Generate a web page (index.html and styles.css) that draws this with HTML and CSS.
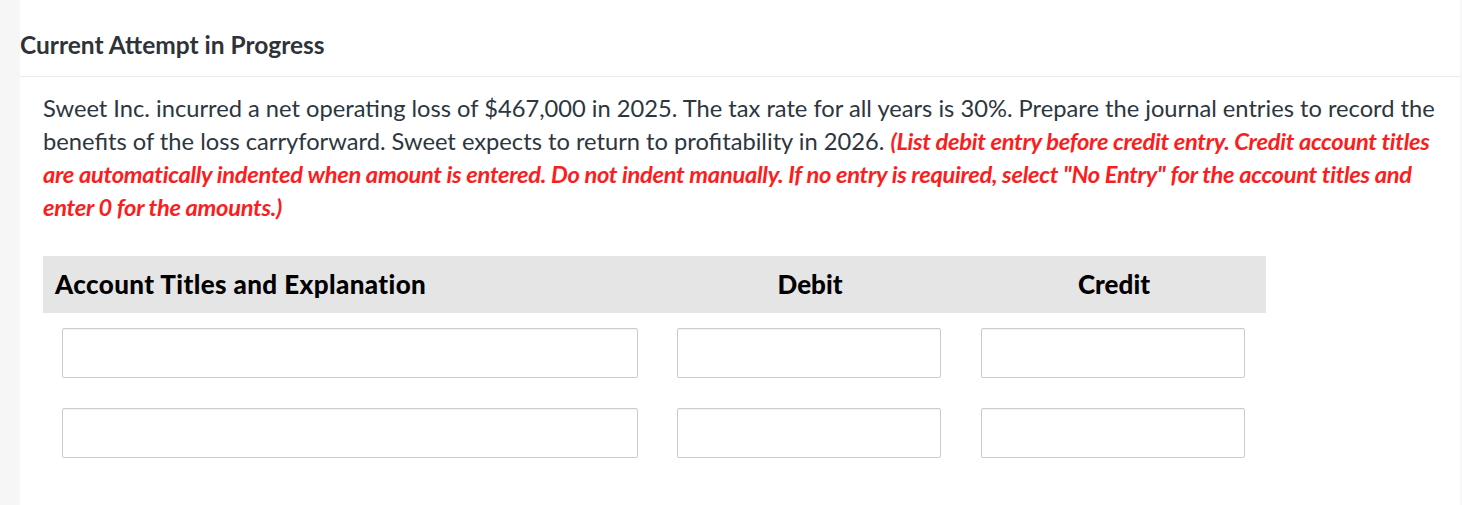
FILE: index.html
```html
<!DOCTYPE html>
<html>
<head>
<meta charset="utf-8">
<link rel="stylesheet" href="styles.css">
</head>
<body>
<div class="page">
  <div class="attempt-header">
    <h2 class="attempt-title">Current Attempt in Progress</h2>
  </div>
  <div class="question">
    <p class="question-text">Sweet Inc. incurred a net operating loss of $467,000 in 2025. The tax rate for all years is 30%. Prepare the journal entries to record the benefits of the loss carryforward. Sweet expects to return to profitability in 2026. <span class="instructions">(List debit entry before credit entry. Credit account titles are automatically indented when amount is entered. Do not indent manually. If no entry is required, select "No Entry" for the account titles and enter 0 for the amounts.)</span></p>
    <div class="journal">
      <div class="journal-head">
        <div class="col col-account">Account Titles and Explanation</div>
        <div class="col col-amount">Debit</div>
        <div class="col col-amount">Credit</div>
      </div>
      <div class="journal-row">
        <div class="cell cell-account"><input class="field" type="text"></div>
        <div class="cell cell-amount"><input class="field" type="text"></div>
        <div class="cell cell-amount"><input class="field" type="text"></div>
      </div>
      <div class="journal-row">
        <div class="cell cell-account"><input class="field" type="text"></div>
        <div class="cell cell-amount"><input class="field" type="text"></div>
        <div class="cell cell-amount"><input class="field" type="text"></div>
      </div>
    </div>
  </div>
</div>
</body>
</html>
```

FILE: styles.css
```css
html, body {
  margin: 0;
  padding: 0;
}
body {
  background: #f6f6f6;
  font-family: Lato, "Liberation Sans", sans-serif;
  height: 505px;
  overflow: hidden;
}
.page {
  margin-left: 20px;
  width: 1440px;
  background: #ffffff;
  min-height: 505px;
}
.attempt-header {
  padding: 29px 0 0 0;
  border-bottom: 1px solid #e9e9e9;
  box-sizing: border-box;
  height: 77px;
}
.attempt-title {
  margin: 0;
  font-size: 24.5px;
  font-weight: 700;
  color: #2f3338;
  line-height: 32px;
}
.question {
  padding: 0 0 0 23px;
}
.question-text {
  margin: 15px 0 0 0;
  font-size: 23.7px;
  line-height: 33px;
  color: #2d3640;
  width: 1400px;
}
.instructions {
  color: #fa1e1e;
  font-weight: 700;
  font-style: italic;
  letter-spacing: -0.3px;
}
.journal {
  margin-top: 32px;
  width: 1223px;
}
.journal-head {
  display: flex;
  height: 57px;
  align-items: center;
  background: #e5e5e5;
}
.col {
  font-weight: 900;
  font-size: 26px;
  color: #000;
  padding-bottom: 2px;
}
.col-account {
  width: 615px;
  padding-left: 12px;
  box-sizing: border-box;
  letter-spacing: 0.4px;
}
.col-amount {
  width: 304px;
  text-align: center;
}
.journal-row {
  display: flex;
  margin-top: 15px;
}
.journal-row + .journal-row {
  margin-top: 30px;
}
.cell {
  box-sizing: border-box;
}
.cell-account {
  width: 614px;
  padding: 0 19px;
}
.cell-amount {
  width: 304px;
  padding: 0 20px;
}
.field {
  display: block;
  width: 100%;
  height: 50px;
  box-sizing: border-box;
  border: 1px solid #cccccc;
  border-radius: 2px;
  box-shadow: inset 0 1px 1px rgba(0,0,0,0.06);
  background: #fff;
  margin: 0;
  padding: 0 8px;
  font-family: Lato, sans-serif;
  font-size: 18px;
}
```
